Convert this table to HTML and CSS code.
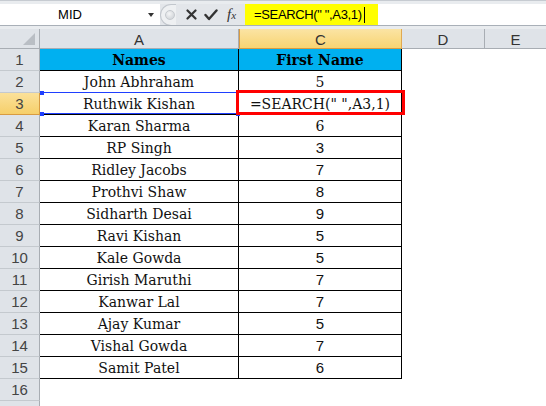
FILE: index.html
```html
<!DOCTYPE html>
<html>
<head>
<meta charset="utf-8">
<link rel="stylesheet" href="styles.css">
</head>
<body>
<div class="app">
  <div class="fbar">
    <div class="namebox"><span class="nbtext">MID</span><span class="arrow"></span></div>
    <div class="tools">
      <span class="knob"><span class="dot"></span></span>
      <svg class="ico icx" width="11" height="11" viewBox="0 0 11 11"><path d="M1.5 1.5 L9.5 9.5 M9.5 1.5 L1.5 9.5" stroke="#333" stroke-width="2.2" stroke-linecap="round"/></svg>
      <svg class="ico icv" width="14" height="12" viewBox="0 0 14 12"><path d="M1.5 6 L5 10 L12.5 1.5" stroke="#333" stroke-width="2.4" fill="none" stroke-linejoin="round" stroke-linecap="round"/></svg>
      <span class="fx">f<span class="x">x</span></span>
    </div>
    <div class="formula"><span class="ftext">=SEARCH(" ",A3,1)<span class="caret"></span></span></div>
  </div>
  <div class="sheet">
    <div class="ch corner"><span class="tri"></span></div>
    <div class="ch">A</div>
    <div class="ch sel">C</div>
    <div class="ch">D</div>
    <div class="ch last">E</div>

    <div class="rh">1</div><div class="c t hdr">Names</div><div class="c t hdr">First Name</div><div class="c"></div><div class="c"></div>
    <div class="rh">2</div><div class="c t nm">John Abhraham</div><div class="c t nm">5</div><div class="c"></div><div class="c"></div>
    <div class="rh sel">3</div><div class="c t nm selA">Ruthwik Kishan<span class="h h1"></span><span class="h h2"></span><span class="h h3"></span><span class="h h4"></span></div><div class="c t nm selC">=SEARCH(" ",A3,1)</div><div class="c"></div><div class="c"></div>
    <div class="rh">4</div><div class="c t nm">Karan Sharma</div><div class="c t nm">6</div><div class="c"></div><div class="c"></div>
    <div class="rh">5</div><div class="c t nm">RP Singh</div><div class="c t num">3</div><div class="c"></div><div class="c"></div>
    <div class="rh">6</div><div class="c t nm">Ridley Jacobs</div><div class="c t num">7</div><div class="c"></div><div class="c"></div>
    <div class="rh">7</div><div class="c t nm">Prothvi Shaw</div><div class="c t num">8</div><div class="c"></div><div class="c"></div>
    <div class="rh">8</div><div class="c t nm">Sidharth Desai</div><div class="c t num">9</div><div class="c"></div><div class="c"></div>
    <div class="rh">9</div><div class="c t nm">Ravi Kishan</div><div class="c t num">5</div><div class="c"></div><div class="c"></div>
    <div class="rh">10</div><div class="c t nm">Kale Gowda</div><div class="c t num">5</div><div class="c"></div><div class="c"></div>
    <div class="rh">11</div><div class="c t nm">Girish Maruthi</div><div class="c t num">7</div><div class="c"></div><div class="c"></div>
    <div class="rh">12</div><div class="c t nm">Kanwar Lal</div><div class="c t num">7</div><div class="c"></div><div class="c"></div>
    <div class="rh">13</div><div class="c t nm">Ajay Kumar</div><div class="c t num">5</div><div class="c"></div><div class="c"></div>
    <div class="rh">14</div><div class="c t nm">Vishal Gowda</div><div class="c t num">7</div><div class="c"></div><div class="c"></div>
    <div class="rh">15</div><div class="c t nm">Samit Patel</div><div class="c t num">6</div><div class="c"></div><div class="c"></div>
    <div class="rh">16</div><div class="c"></div><div class="c"></div><div class="c"></div><div class="c"></div>
    <div class="rh">17</div><div class="c"></div><div class="c"></div><div class="c"></div><div class="c"></div>
  </div>
</div>
</body>
</html>
```

FILE: styles.css
```css
* { box-sizing: border-box; }
html, body { margin: 0; padding: 0; background: #fff; overflow: hidden; }
.app { width: 546px; height: 406px; overflow: hidden; font-family: "Liberation Sans", Arial, sans-serif; }

.fbar {
  height: 29px;
  background: #e9ecef;
  border-top: 1px solid #c6cbd1;
  padding: 3px 0 4px 0;
  display: flex;
  align-items: stretch;
  position: relative;
}
.fbar::after {
  content: "";
  position: absolute; left: 0; right: 0; bottom: 3px; height: 1px; background: #a9b0b8;
}
.namebox {
  width: 160px;
  background: #fff;
  display: flex; align-items: center;
  position: relative;
}
.nbtext { width: 140px; text-align: center; font-size: 13px; color: #000; }
.arrow {
  position: absolute; left: 148px; top: 9px;
  width: 0; height: 0;
  border-left: 3.5px solid transparent; border-right: 3.5px solid transparent;
  border-top: 4px solid #333;
}
.tools {
  width: 85px;
  display: flex; align-items: center;
  background: #e3e6ea;
  position: relative;
}
.knob {
  width: 16px; height: 22px;
  border-radius: 11px 0 0 11px;
  border: 1px solid #c2c7cd; border-right: none;
  background: #eef0f2;
  display: flex; align-items: center; justify-content: center;
}
.dot { width: 10px; height: 10px; border-radius: 50%; background: radial-gradient(circle at 40% 35%, #f4f5f6, #c9cdd2); border: 1px solid #c5c9ce; margin-left: 3px; }
.ico { display: block; }
.icx { margin-left: 10px; }
.icv { margin-left: 7px; }
.fx { font-family: "Liberation Serif", serif; font-style: italic; font-size: 15px; color: #333; margin-left: 9px; line-height: 1; }
.fx .x { font-size: 11px; }
.formula {
  flex: 1; background: #fff; display: flex; align-items: center;
}
.ftext {
  background: #ffff00; height: 100%; width: 133px;
  display: flex; align-items: center; padding-left: 9px;
  font-size: 13px; letter-spacing: -0.35px; color: #000;
}
.caret { display: block; width: 1px; height: 16px; background: #000; margin-left: 2px; }

.sheet {
  display: grid;
  grid-template-columns: 40px 199px 163px 83px 1fr;
  grid-template-rows: 20px repeat(17, 22px);
}
.ch {
  background: #dfe3e8;
  border-right: 1px solid #a8adb3;
  border-bottom: 1px solid #a8adb3;
  display: flex; align-items: center; justify-content: center;
  font-size: 15px; color: #333;
  padding-top: 1px;
}
.ch.last { border-right: none; }
.ch.sel {
  background: linear-gradient(#fbe4a4, #f8d472);
  border-right: 1px solid #e0a951;
  border-left: 1px solid #d89b42;
  border-bottom: 1px solid #d89b42;
}
.corner { position: relative; }
.tri {
  position: absolute; right: 4px; bottom: 3px; width: 0; height: 0;
  border-left: 12px solid transparent; border-bottom: 12px solid #b9bec4;
}
.rh {
  background: #dfe3e8;
  border-right: 1px solid #a8adb3;
  border-bottom: 1px solid #c4c9ce;
  display: flex; align-items: center; justify-content: center;
  font-size: 15px; color: #444;
}
.rh.sel {
  background: linear-gradient(#fbe19a, #f6cf6a);
  border-right: 1px solid #d89b42;
  border-bottom: 1px solid #d89b42;
}
.c { background: #fff; }
.t {
  border-right: 1px solid #000; border-bottom: 1px solid #000;
  display: flex; align-items: center; justify-content: center;
  color: #111;
}
.hdr { background: #00b0f0; font-family: "DejaVu Serif", serif; font-weight: bold; font-size: 14px; color: #000; }
.nm { font-family: "DejaVu Serif", serif; font-size: 14px; }
.num { font-family: "Liberation Sans", sans-serif; font-size: 15px; }
.selA { position: relative; border-top: 1px solid #1f3fff; box-shadow: inset 0 -1px 0 #1f3fff; margin-top: -1px; }
.h { position: absolute; width: 4px; height: 4px; background: #1f3fff; }
.h1 { left: 0; top: -2px; }
.h2 { right: -2px; top: -2px; }
.h3 { left: 0; bottom: -2px; }
.h4 { right: -2px; bottom: -2px; }
.selC { position: relative; }
.selC::after {
  content: ""; position: absolute; left: -3px; top: -3px; right: -4px; bottom: -1px;
  border: 3px solid #ff0000;
}
```
